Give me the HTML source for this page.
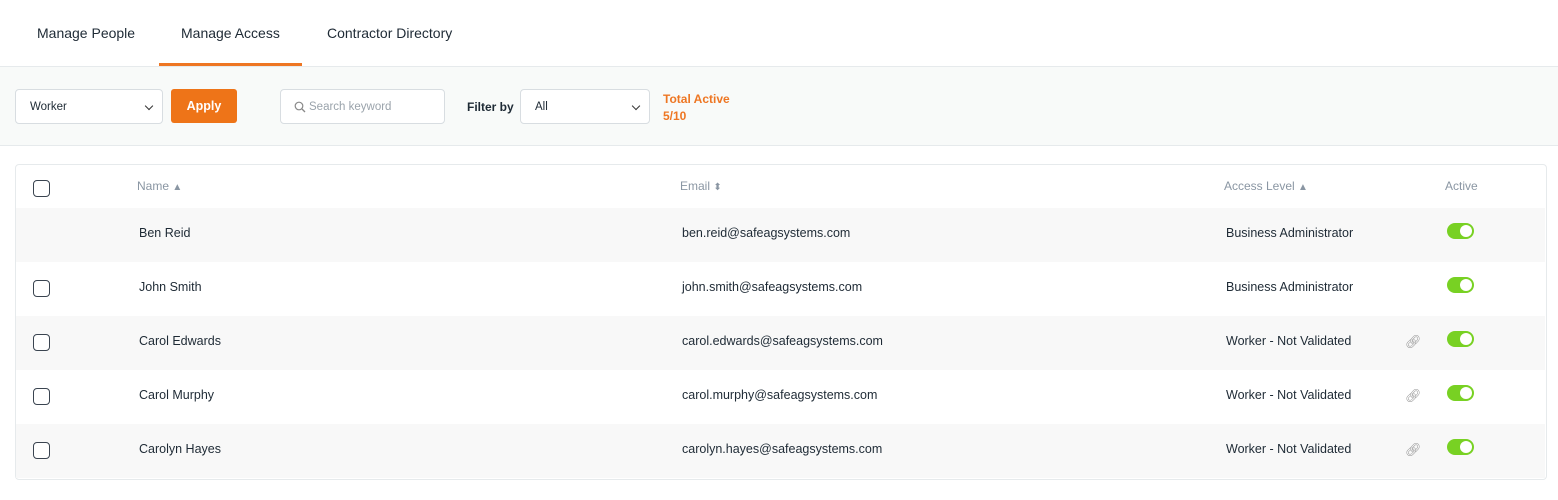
<!DOCTYPE html>
<html><head><style>
*{box-sizing:border-box;margin:0;padding:0}
body{width:1558px;height:500px;background:#fff;font-family:"Liberation Sans",sans-serif;color:#1e2a35;position:relative;overflow:hidden}
.abs{position:absolute}
.tab{position:absolute;top:25px;font-size:14px;color:#1e2a35}
.sel{position:absolute;top:89px;height:35px;border:1px solid #d8dde1;border-radius:4px;background:#fff;font-size:11.5px;padding:11px 14px}
.chev{position:absolute;right:10px;top:13px;width:6px;height:6px;border-right:1.5px solid #333;border-bottom:1.5px solid #333;transform:rotate(45deg)}
.cb{position:absolute;left:33px;width:17px;height:17px;border:1.5px solid #3a4450;border-radius:4px;background:#fff}
.row{position:absolute;left:16px;width:1529px;height:54px;font-size:12.5px}
.row span{position:absolute;top:18px}
.tg{position:absolute;left:1431px;top:15px;width:27px;height:16px;border-radius:8px;background:#78d123}
.tg:after{content:"";position:absolute;right:2px;top:2px;width:12px;height:12px;border-radius:50%;background:#fff}
.th{position:absolute;top:179px;font-size:12px;color:#8a96a3}
.th b{font-size:10px;font-weight:normal}
</style></head><body>
<div class="tab" style="left:37px">Manage People</div>
<div class="tab" style="left:181px">Manage Access</div>
<div class="tab" style="left:327px">Contractor Directory</div>
<div class="abs" style="left:159px;top:63px;width:143px;height:3px;background:#ee7623"></div>
<div class="abs" style="left:0;top:66px;width:1558px;height:80px;background:#f8faf9;border-top:1px solid #e6eaec;border-bottom:1px solid #e6eaec"></div>
<div class="sel" style="left:15px;width:148px">Worker<div class="chev"></div></div>
<div class="abs" style="left:171px;top:89px;width:66px;height:34px;background:#ee7418;border-radius:3px;color:#fff;font-size:12.5px;font-weight:bold;text-align:center;line-height:34px">Apply</div>
<div class="sel" style="left:280px;width:165px;color:#9aa3ab;padding-left:28px">Search keyword
<svg class="abs" style="left:13px;top:11px" width="12" height="12" viewBox="0 0 12 12"><circle cx="5" cy="5" r="3.8" fill="none" stroke="#888" stroke-width="1.2"/><path d="M8 8l3 3" stroke="#888" stroke-width="1.3"/></svg></div>
<div class="abs" style="left:467px;top:100px;font-size:12px;font-weight:bold">Filter by</div>
<div class="sel" style="left:520px;width:130px">All<div class="chev"></div></div>
<div class="abs" style="left:663px;top:91px;font-size:12px;font-weight:bold;color:#ee7623;line-height:17px">Total Active<br>5/10</div>
<div class="abs" style="left:15px;top:164px;width:1532px;height:316px;border:1px solid #e6eaec;border-radius:4px"></div>
<div class="cb" style="top:180px"></div>
<div class="th" style="left:137px">Name <b>▲</b></div>
<div class="th" style="left:680px">Email <b>⬍</b></div>
<div class="th" style="left:1224px">Access Level <b>▲</b></div>
<div class="th" style="left:1445px">Active</div>

<div class="row" style="top:208px;background:#f8f8f8"><span style="left:123px">Ben Reid</span><span style="left:666px">ben.reid@safeagsystems.com</span><span style="left:1210px">Business Administrator</span><div class="tg"></div></div>
<div class="row" style="top:262px"><span style="left:123px">John Smith</span><span style="left:666px">john.smith@safeagsystems.com</span><span style="left:1210px">Business Administrator</span><div class="tg"></div></div>
<div class="row" style="top:316px;background:#f8f8f8"><span style="left:123px">Carol Edwards</span><span style="left:666px">carol.edwards@safeagsystems.com</span><span style="left:1210px">Worker - Not Validated</span><span style="left:1389px;color:#999;font-size:13px">🔗&#xFE0E;</span><div class="tg"></div></div>
<div class="row" style="top:370px"><span style="left:123px">Carol Murphy</span><span style="left:666px">carol.murphy@safeagsystems.com</span><span style="left:1210px">Worker - Not Validated</span><span style="left:1389px;color:#999;font-size:13px">🔗&#xFE0E;</span><div class="tg"></div></div>
<div class="row" style="top:424px;background:#f8f8f8"><span style="left:123px">Carolyn Hayes</span><span style="left:666px">carolyn.hayes@safeagsystems.com</span><span style="left:1210px">Worker - Not Validated</span><span style="left:1389px;color:#999;font-size:13px">🔗&#xFE0E;</span><div class="tg"></div></div>
<div class="cb" style="top:280px"></div>
<div class="cb" style="top:334px"></div>
<div class="cb" style="top:388px"></div>
<div class="cb" style="top:442px"></div>
</body></html>
